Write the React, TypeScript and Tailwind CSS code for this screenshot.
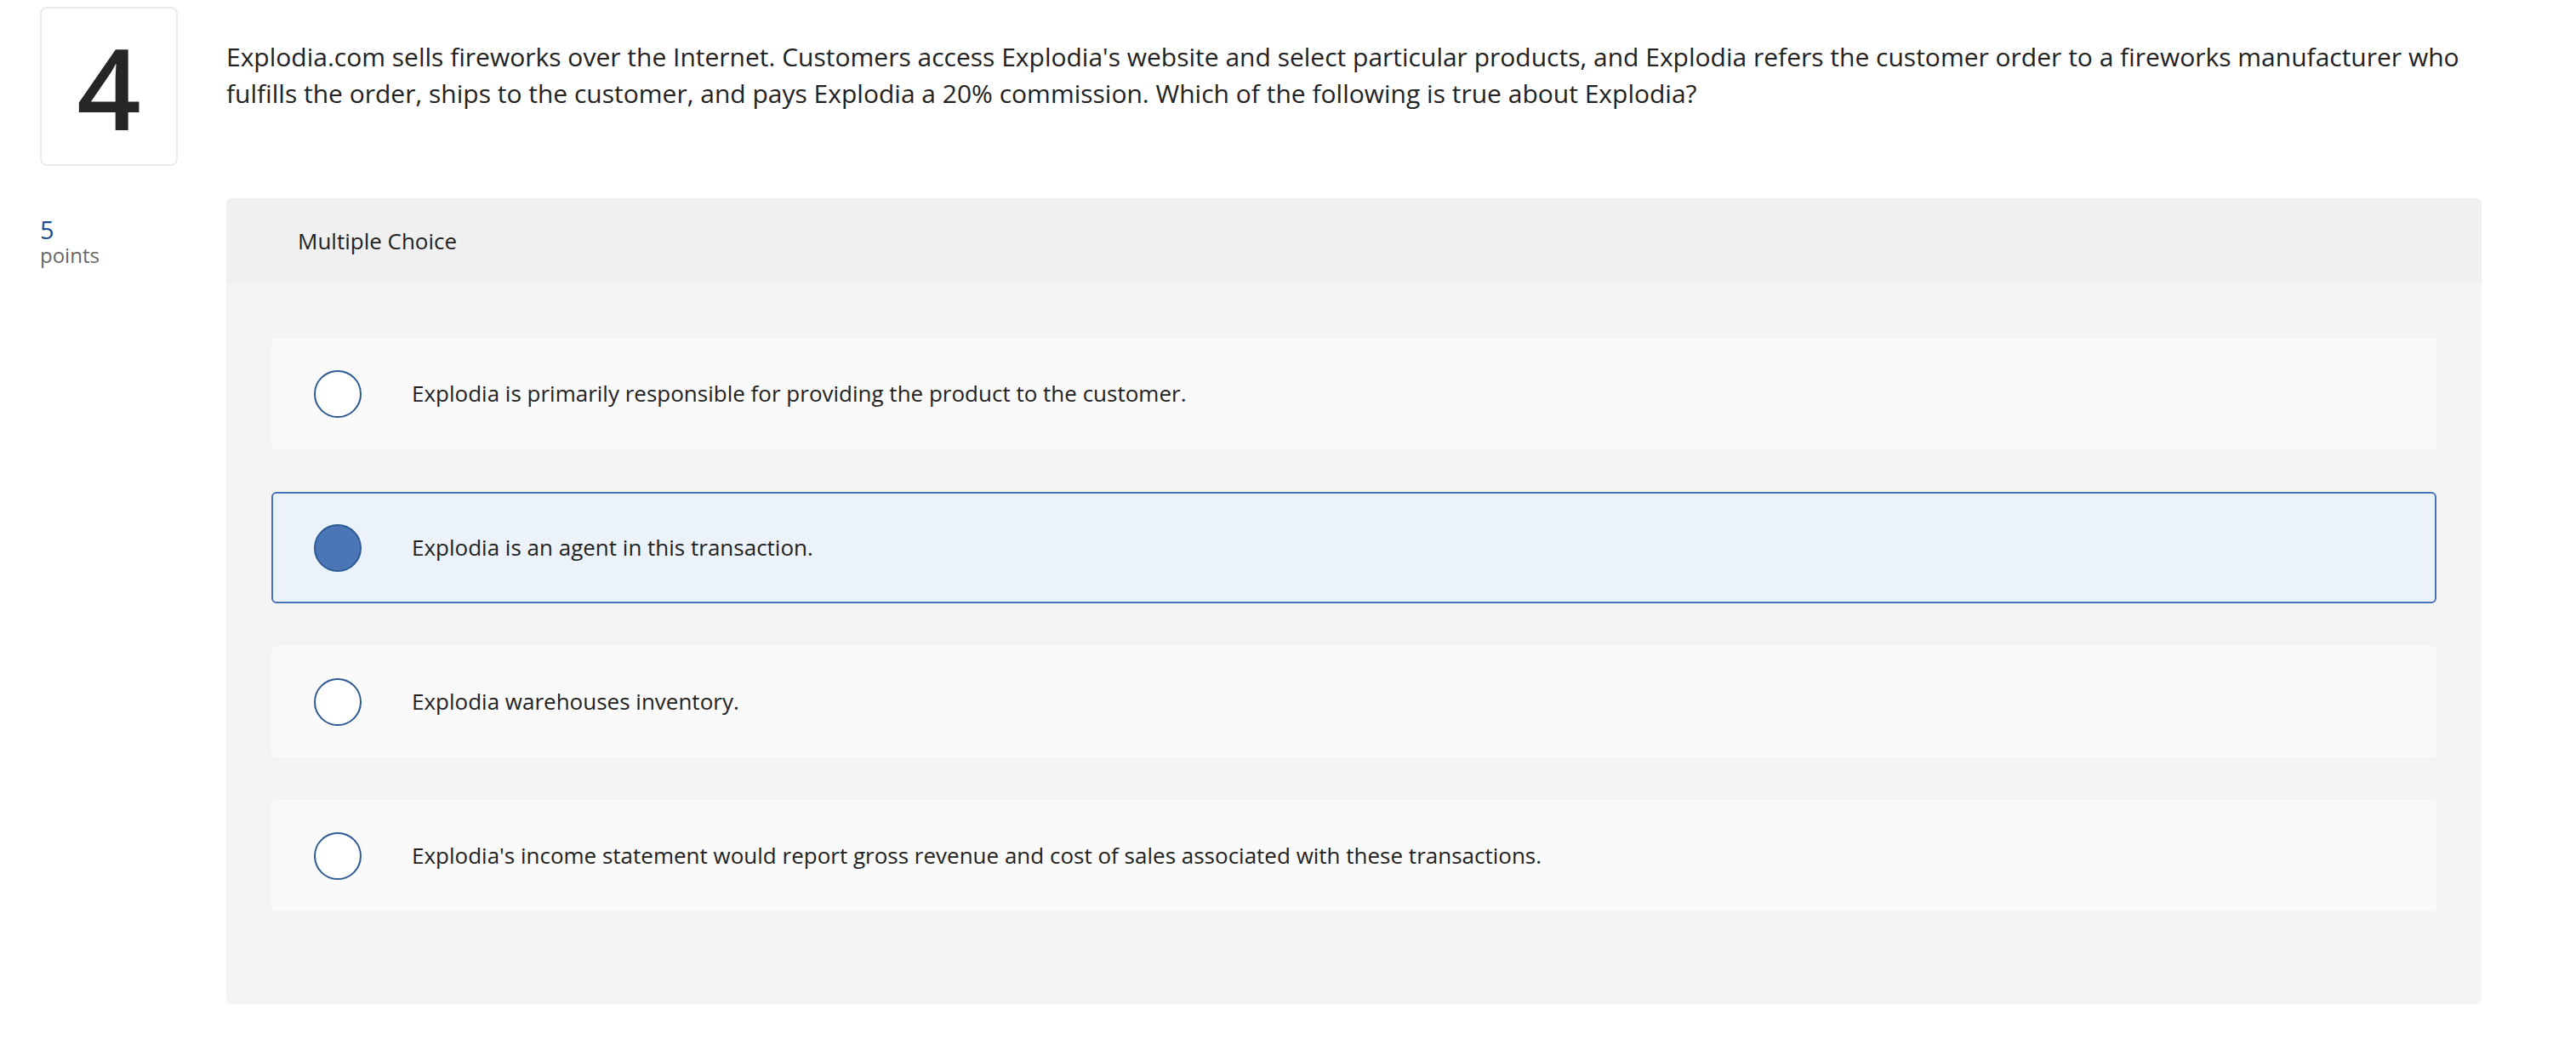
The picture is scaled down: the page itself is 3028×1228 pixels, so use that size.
import React from "react";

const options = [
  "Explodia is primarily responsible for providing the product to the customer.",
  "Explodia is an agent in this transaction.",
  "Explodia warehouses inventory.",
  "Explodia's income statement would report gross revenue and cost of sales associated with these transactions.",
];

export default function App() {
  const selected = 1;

  return (
    <div className="min-h-[1228px] bg-white font-['Open_Sans',_'Liberation_Sans',_sans-serif] text-[#222]">
      <div className="flex pl-[47px] pr-[111px] pt-[8px]">
        <div className="w-[162px] shrink-0">
          <div className="flex h-[187px] items-center justify-center rounded-[8px] border-2 border-[#ebebeb] bg-white">
            <span className="text-[132px] font-semibold leading-none text-[#262626]">4</span>
          </div>
          <div className="mt-[60px]">
            <p className="text-[29px] leading-[30px] text-[#1f4b8e]">5</p>
            <p className="text-[24px] leading-[30px] text-[#666]">points</p>
          </div>
        </div>

        <div className="ml-[57px] flex-1">
          <p className="mt-[37px] text-[30px] leading-[43px] text-[#222]">
            Explodia.com sells fireworks over the Internet. Customers access Explodia's website and select particular products, and Explodia refers the customer order to a fireworks manufacturer who fulfills the order, ships to the customer, and pays Explodia a 20% commission. Which of the following is true about Explodia?
          </p>

          <div className="mt-[102px] overflow-hidden rounded-[6px] bg-[#f4f4f4]">
            <div className="flex h-[100px] items-center bg-[#f0f0f0] px-[84px]">
              <span className="text-[26px] text-[#222]">Multiple Choice</span>
            </div>
            <div className="flex flex-col gap-[50px] px-[53px] pb-[109px] pt-[64px]">
              {options.map((text, i) => {
                const on = i === selected;
                return (
                  <div key={i}
                    className={`flex h-[131px] items-center rounded-[6px] border-2 pl-[48px] ${on ? "border-[#4573b7] bg-[#ebf2fa]" : "border-transparent bg-[#fafafa]"}`}>
                    <span className={`h-[56px] w-[56px] shrink-0 rounded-full border-2 border-[#2e5a95] ${on ? "bg-[#4a75b6]" : "bg-white"}`} />
                    <span className="ml-[59px] text-[26px] text-[#222]">{text}</span>
                  </div>
                );
              })}
            </div>
          </div>
        </div>
      </div>
    </div>
  );
}
